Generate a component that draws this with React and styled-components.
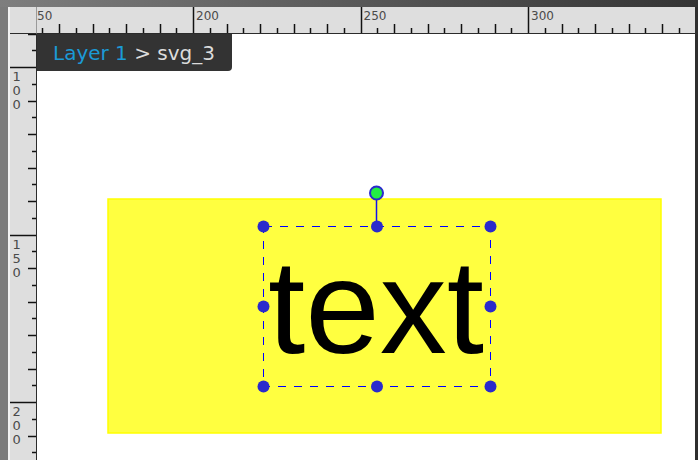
import styled, { createGlobalStyle } from "styled-components";

const GlobalStyle = createGlobalStyle`
  * { box-sizing: border-box; }
  body {
    margin: 0;
    background: #7b7b7b;
  }
`;

// px per user unit on the rulers (zoomed canvas)
const SCALE = 3.35;

const Frame = styled.div`
  width: 698px;
  height: 460px;
  overflow: hidden;
  padding: 7px 0 0 8px;
  background: linear-gradient(to right, #7e7e7e, #343434) top left / 100% 7px no-repeat,
    #7b7b7b;
`;

const Workspace = styled.div`
  height: 453px;
  display: grid;
  grid-template-columns: 27px 1fr;
  grid-template-rows: 27px 1fr;
  background: #fff;
  border-left: 2px solid #f2f2f2;
  border-right: 3px solid #2f2f2f;
`;

const Corner = styled.div`
  background: #dedede;
  border-right: 1px solid #9a9a9a;
  border-bottom: 1px solid #2b2b2b;
`;

const Ruler = styled.div`
  background: #dedede;
  overflow: hidden;
  border-${({ side }) => side}: 1px solid #2b2b2b;
  svg { display: block; }
`;

const Canvas = styled.div`
  position: relative;
  overflow: hidden;
  background: #fff;
  svg { display: block; }
`;

const Breadcrumb = styled.div`
  position: absolute;
  top: 0;
  left: 0;
  height: 37px;
  display: flex;
  align-items: center;
  padding: 0 17px 0 16px;
  background: #333;
  border-bottom-right-radius: 4px;
  font-family: "DejaVu Sans", sans-serif;
  font-size: 20px;
  color: #dcdcdc;
  white-space: pre;
`;

const LayerName = styled.span`
  color: #1b9ad6;
`;

const LABEL = { fontFamily: "DejaVu Sans", fill: "#4a4a4a" };

const tickList = (from, to) => {
  const out = [];
  for (let u = from; u <= to; u += 5) out.push(u);
  return out;
};

function TopRuler() {
  const pos = (u) => 156 + (u - 200) * SCALE;
  return (
    <svg width="658" height="26">
      {tickList(150, 350).map((u) => {
        const x = Math.round(pos(u)) + 0.5;
        const y1 = u % 50 === 0 ? 0 : u % 10 === 0 ? 17 : 21;
        return <line key={u} x1={x} x2={x} y1={y1} y2={26} stroke="#111" strokeWidth="1.5" />;
      })}
      {/* the 150 label is half hidden under the corner: only "50" shows */}
      <text x="0" y="13" fontSize="12" {...LABEL}>50</text>
      {[200, 250, 300].map((u) => (
        <text key={u} x={pos(u) + 3} y="13" fontSize="12" {...LABEL}>
          {u}
        </text>
      ))}
    </svg>
  );
}

function LeftRuler() {
  const pos = (v) => 33 + (v - 100) * SCALE;
  return (
    <svg width="26" height="426">
      {tickList(90, 225).map((v) => {
        const y = Math.round(pos(v)) + 0.5;
        const x1 = v % 50 === 0 ? 0 : v % 10 === 0 ? 18 : 22;
        return <line key={v} x1={x1} x2={26} y1={y} y2={y} stroke="#111" strokeWidth="1.5" />;
      })}
      {[100, 150, 200].map((v) => (
        <text key={v} fontSize="13" {...LABEL}>
          {String(v).split("").map((d, i) => (
            <tspan key={i} x="2.5" y={pos(v) + 14 + i * 14}>
              {d}
            </tspan>
          ))}
        </text>
      ))}
    </svg>
  );
}

const HANDLE = "#2a2acc";

function Selection({ x, y, w, h }) {
  const mx = x + w / 2;
  const my = y + h / 2;
  const grips = [
    [x, y], [mx, y], [x + w, y],
    [x, my], [x + w, my],
    [x, y + h], [mx, y + h], [x + w, y + h],
  ];
  return (
    <g>
      <rect
        x={x + 0.5}
        y={y + 0.5}
        width={w}
        height={h}
        fill="none"
        stroke="#0000ff"
        strokeWidth="1"
        strokeDasharray="8,8"
        shapeRendering="crispEdges"
      />
      <line x1={mx} x2={mx} y1={y - 27} y2={y} stroke="#1111ee" strokeWidth="1.5" />
      <circle cx={mx} cy={y - 33} r="6.5" fill="#22ee44" stroke={HANDLE} strokeWidth="2" />
      {grips.map(([cx, cy], i) => (
        <circle key={i} cx={cx + 0.5} cy={cy + 0.5} r="6" fill={HANDLE} />
      ))}
    </g>
  );
}

export default function App() {
  return (
    <>
      <GlobalStyle />
      <Frame>
        <Workspace>
          <Corner />
          <Ruler side="bottom">
            <TopRuler />
          </Ruler>
          <Ruler side="right">
            <LeftRuler />
          </Ruler>
          <Canvas>
            <svg width="658" height="426">
              <rect x="71" y="165" width="553" height="234" fill="#ffff40" stroke="#ffff00" strokeWidth="1.5" />
              <text x="231" y="319" fontFamily="Liberation Sans, Arial, sans-serif" fontSize="134" fill="#000">
                text
              </text>
              <Selection x={226} y={192} w={227} h={160} />
            </svg>
            <Breadcrumb>
              <LayerName>Layer 1</LayerName> &gt; svg_3
            </Breadcrumb>
          </Canvas>
        </Workspace>
      </Frame>
    </>
  );
}
